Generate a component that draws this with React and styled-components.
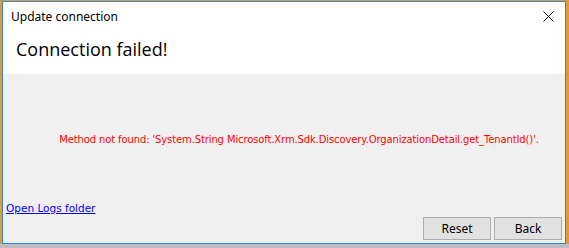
import React from 'react'
import styled, { createGlobalStyle } from 'styled-components'

const GlobalStyle = createGlobalStyle`
  html, body {
    margin: 0;
    padding: 0;
    background: #c4c4cc;
  }
`

export default function App() {
  return (
    <>
      <GlobalStyle />
      <Desktop>
        <Window>
          <Header>
            <TitleBar>
              <Title>Update connection</Title>
              <CloseButton aria-label="Close">
                <svg width="11" height="11" viewBox="0 0 11 11">
                  <path d="M0.5 0.5 L10.5 10.5 M10.5 0.5 L0.5 10.5" stroke="#000" strokeWidth="1" />
                </svg>
              </CloseButton>
            </TitleBar>
            <Heading>Connection failed!</Heading>
          </Header>
          <Body>
            <Message>
              Method not found: 'System.String Microsoft.Xrm.Sdk.Discovery.OrganizationDetail.get_TenantId()'.
            </Message>
            <Footer>
              <LogsLink href="#">Open Logs folder</LogsLink>
              <Buttons>
                <Button>Reset</Button>
                <Button>Back</Button>
              </Buttons>
            </Footer>
          </Body>
        </Window>
      </Desktop>
    </>
  )
}

const Desktop = styled.div`
  width: 569px;
  height: 248px;
  box-sizing: border-box;
  padding: 1px 3px 4px 2px;
  background: linear-gradient(to bottom, #e6992c 0, #e6992c 244px, #bdbdc6 244px);
`

const Window = styled.div`
  height: 100%;
  box-sizing: border-box;
  border: 1px solid #2b87d9;
  display: flex;
  flex-direction: column;
  background: #f0f0f0;
`

const Header = styled.div`
  background: #fff;
  height: 72px;
  display: flex;
  flex-direction: column;
`

const TitleBar = styled.div`
  height: 30px;
  display: flex;
  align-items: center;
  justify-content: space-between;
  padding: 0 11px 0 8px;
`

const Title = styled.span`
  font-family: "Noto Sans", "Open Sans", sans-serif;
  font-size: 12px;
  color: #000;
  margin-top: -1px;
`

const CloseButton = styled.span`
  display: flex;
  width: 11px;
  height: 11px;
  margin-top: -1px;
`

const Heading = styled.h1`
  margin: 5px 0 0 13px;
  font-family: "Open Sans", "Noto Sans", sans-serif;
  font-weight: normal;
  font-size: 18px;
  color: #000;
`

const Body = styled.div`
  flex: 1;
  display: flex;
  flex-direction: column;
`

const Message = styled.div`
  flex: 1;
  display: flex;
  align-items: center;
  justify-content: center;
  padding: 4px 0 0 30px;
  font-family: "DejaVu Sans", Tahoma, sans-serif;
  font-size: 10px;
  color: #ff0000;
  letter-spacing: -0.12px;
`

const Footer = styled.div`
  height: 40px;
  display: flex;
  justify-content: space-between;
  padding: 0 3px 3px 3px;
`

const LogsLink = styled.a`
  align-self: flex-start;
  margin-top: 2px;
  font-family: "DejaVu Sans", Tahoma, sans-serif;
  font-size: 10.5px;
  color: #0000ff;
  text-decoration: underline;
  line-height: 13px;
`

const Buttons = styled.div`
  align-self: flex-end;
  display: flex;
  gap: 3px;
`

const Button = styled.button`
  width: 68px;
  height: 23px;
  box-sizing: border-box;
  border: 1px solid #adadad;
  background: #e1e1e1;
  font-family: "Noto Sans", "Open Sans", sans-serif;
  font-size: 12px;
  color: #000;
  padding: 0;
`
